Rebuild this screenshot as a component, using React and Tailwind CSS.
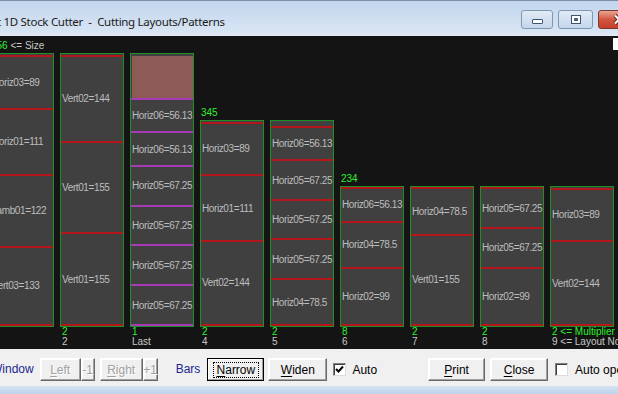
const RED = 'bg-[#b3171b]';
const MAG = 'bg-[#a53cb5]';

const bars = [
  { size: 456, mult: '2', no: '1', top: '456', pieces: [['Horiz03', 89], ['Horiz01', 111], ['Jamb01', 122], ['Vert03', 133]] },
  { size: 456, mult: '2', no: '2', pieces: [['Vert02', 144], ['Vert01', 155], ['Vert01', 155]] },
  {
    size: 456, mult: '1', no: 'Last', waste: true,
    pieces: [['Horiz06', 56.13], ['Horiz06', 56.13], ['Horiz05', 67.25], ['Horiz05', 67.25], ['Horiz05', 67.25], ['Horiz05', 67.25]],
  },
  { size: 345, mult: '2', no: '4', top: '345', pieces: [['Horiz03', 89], ['Horiz01', 111], ['Vert02', 144]] },
  {
    size: 345, mult: '2', no: '5',
    pieces: [['Horiz06', 56.13], ['Horiz05', 67.25], ['Horiz05', 67.25], ['Horiz05', 67.25], ['Horiz04', 78.5]],
  },
  { size: 234, mult: '8', no: '6', top: '234', pieces: [['Horiz06', 56.13], ['Horiz04', 78.5], ['Horiz02', 99]] },
  { size: 234, mult: '2', no: '7', pieces: [['Horiz04', 78.5], ['Vert01', 155]] },
  { size: 234, mult: '2', no: '8', pieces: [['Horiz05', 67.25], ['Horiz05', 67.25], ['Horiz02', 99]] },
  { size: 234, mult: '2', no: '9', last: true, pieces: [['Horiz03', 89], ['Vert02', 144]] },
];

const Bar = ({ bar, first }) => {
  const used = bar.pieces.reduce((s, p) => s + p[1], 0);
  const waste = Math.max(bar.size - used, 0);
  const line = bar.waste ? MAG : RED;

  return (
    <div className={`flex flex-col w-[64px] shrink-0 ${first ? '-ml-[10px]' : ''}`}>
      <div className="h-[13px] pl-[1px] text-[10px] leading-[12px] whitespace-nowrap">
        {bar.top && <span className="text-[#2ef02e]">{bar.top}</span>}
        {first && <span className="text-[#c8c8c8]"> &lt;= Size</span>}
      </div>
      <div
        className="flex flex-col border border-[#1f8f27] bg-[#404040] overflow-hidden"
        style={{ height: Math.ceil(bar.size * 0.6) }}
      >
        <div
          className={`basis-0 min-h-0 ${bar.waste ? 'bg-[#8e5a58] ml-[1px] mt-[2px]' : ''}`}
          style={{ flexGrow: waste }}
        />
        <div className={`h-[2px] shrink-0 ${line}`} />
        {bar.pieces.map((p, i) => (
          <div key={i} className="contents">
            <div
              className="basis-0 min-h-0 flex items-center pl-[1px] text-[10px] tracking-[-0.4px] text-[#bdbdbd] whitespace-nowrap overflow-hidden"
              style={{ flexGrow: p[1] }}
            >
              {p[0]}={p[1]}
            </div>
            <div className={`h-[2px] shrink-0 ${line}`} />
          </div>
        ))}
      </div>
      <div className="h-[20px] pl-[2px] text-[10px] leading-[10px] whitespace-nowrap">
        <div className="text-[#2ef02e]">{bar.mult}{bar.last && ' <= Multiplier'}</div>
        <div className="text-[#c8c8c8]">{bar.no}{bar.last && ' <= Layout No'}</div>
      </div>
    </div>
  );
};

// first letter gets the accelerator underline
const Label = ({ text }) => (
  <>
    <span className="underline underline-offset-2">{text[0]}</span>
    {text.slice(1)}
  </>
);

const Btn = ({ text, w, disabled, focused, mnemonic = true }) => (
  <div
    className={`h-[23px] shrink-0 flex items-center justify-center bg-[#f0f0f0] ${
      focused ? 'border border-black' : 'border-t border-l border-t-white border-l-white border-r border-b border-r-[#696969] border-b-[#696969]'
    } shadow-[inset_-1px_-1px_0_#a0a0a0,inset_1px_1px_0_#ffffff] ${
      disabled ? 'text-[#a0a0a0] [text-shadow:1px_1px_0_#ffffff]' : 'text-black'
    }`}
    style={{ width: w }}
  >
    {focused ? (
      <span className="border border-dotted border-black px-[3px] leading-[14px]">
        <Label text={text} />
      </span>
    ) : mnemonic ? (
      <Label text={text} />
    ) : (
      text
    )}
  </div>
);

const Check = ({ checked }) => (
  <div className="w-[13px] h-[13px] shrink-0 bg-white border-t border-l border-t-[#808080] border-l-[#808080] border-r border-b border-r-[#dcdcdc] border-b-[#dcdcdc] shadow-[inset_1px_1px_0_#404040] flex items-center justify-center">
    {checked && (
      <svg width="9" height="9" viewBox="0 0 9 9">
        <polyline points="1,4 3.5,6.5 8,1.5" fill="none" stroke="black" strokeWidth="2" />
      </svg>
    )}
  </div>
);

export default function App() {
  return (
    <div className="w-[618px] h-[394px] overflow-hidden flex flex-col bg-[#f0f0f0] font-['Liberation_Sans',Arial,sans-serif]">
      {/* title bar */}
      <div className="h-[34px] shrink-0 flex items-start border-t border-[#7a8fa8] bg-linear-to-b from-[#c3d6ed] to-[#d9e5f3]">
        <div className="pt-[12px] -ml-[3px] text-[11.5px] tracking-[-0.3px] leading-[18px] text-[#1b1b1b] whitespace-pre font-['Noto_Sans',sans-serif]">
          t 1D Stock Cutter  -  Cutting Layouts/Patterns
        </div>
        <div className="ml-auto mt-[9px] flex gap-[5px] -mr-[22px]">
          <div className="w-[32px] h-[19px] rounded-[3px] border border-[#8097b2] bg-linear-to-b from-[#e2ebf6] to-[#c5d6eb] flex items-end justify-center pb-[4px]">
            <div className="w-[11px] h-[5px] rounded-[1px] border border-[#3b5270] bg-white" />
          </div>
          <div className="w-[35px] h-[19px] rounded-[3px] border border-[#8097b2] bg-linear-to-b from-[#e2ebf6] to-[#c5d6eb] flex items-center justify-center">
            <div className="w-[10px] h-[9px] border border-[#3b5270] bg-white flex items-center justify-center">
              <div className="w-[4px] h-[3px] bg-[#4d6382]" />
            </div>
          </div>
          <div className="w-[42px] h-[19px] rounded-[3px] border border-[#7b3a2e] bg-linear-to-b from-[#e8a597] via-[#d2553f] to-[#c5402c] flex items-center justify-center">
            <svg width="12" height="11" viewBox="0 0 12 11">
              <path d="M2 1.5 L10 9.5 M10 1.5 L2 9.5" stroke="#5a1a10" strokeWidth="4" />
              <path d="M2 1.5 L10 9.5 M10 1.5 L2 9.5" stroke="white" strokeWidth="2.2" />
            </svg>
          </div>
        </div>
      </div>
      <div className="h-[2px] shrink-0 bg-[#e1e9f4]" />

      {/* cutting layouts */}
      <div className="relative h-[313px] shrink-0 flex items-end gap-[6px] pb-[2px] bg-[#141414] overflow-hidden">
        {bars.map((b, i) => (
          <Bar key={i} bar={b} first={i === 0} />
        ))}
        <div className="absolute right-0 top-[2px] w-[5px] h-[12px] bg-white" />
      </div>

      {/* toolbar */}
      <div className="h-[37px] shrink-0 flex items-start pt-[9px] text-[12px] whitespace-nowrap">
        <div className="-ml-[9px] w-[43px] h-[23px] leading-[23px] text-[#1c2590]">Window</div>
        <div className="ml-[6px] flex">
          <Btn text="Left" w={41} disabled />
          <Btn text="-1" w={14} disabled mnemonic={false} />
        </div>
        <div className="ml-[5px] flex">
          <Btn text="Right" w={43} disabled />
          <Btn text="+1" w={15} disabled mnemonic={false} />
        </div>
        <div className="ml-[18px] h-[23px] leading-[23px] text-[#1c2590]">Bars</div>
        <div className="ml-[7px]">
          <Btn text="Narrow" w={57} focused />
        </div>
        <div className="ml-[4px]">
          <Btn text="Widen" w={59} />
        </div>
        <div className="ml-[6px] h-[23px] flex items-center gap-[6px]">
          <Check checked />
          <span>Auto</span>
        </div>
        <div className="ml-[51px]">
          <Btn text="Print" w={57} />
        </div>
        <div className="ml-[5px]">
          <Btn text="Close" w={58} />
        </div>
        <div className="ml-[7px] h-[23px] flex items-center gap-[7px]">
          <Check />
          <span>Auto open</span>
        </div>
      </div>

      {/* window frame bottom */}
      <div className="flex-1 bg-linear-to-b from-[#d6e4f3] to-[#bcd2ea]" />
    </div>
  );
}
